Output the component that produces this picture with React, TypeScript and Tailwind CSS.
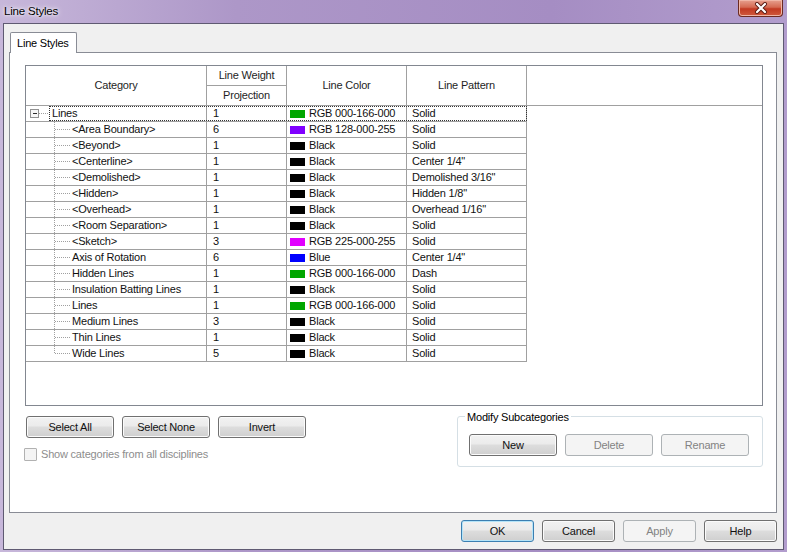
import React from "react";

type Row = {
  name: string;
  weight: string;
  swatch: string;
  color: string;
  pattern: string;
};

const ROWS: Row[] = [
  { name: "Lines", weight: "1", swatch: "#00a600", color: "RGB 000-166-000", pattern: "Solid" },
  { name: "<Area Boundary>", weight: "6", swatch: "#8000ff", color: "RGB 128-000-255", pattern: "Solid" },
  { name: "<Beyond>", weight: "1", swatch: "#000000", color: "Black", pattern: "Solid" },
  { name: "<Centerline>", weight: "1", swatch: "#000000", color: "Black", pattern: "Center 1/4\"" },
  { name: "<Demolished>", weight: "1", swatch: "#000000", color: "Black", pattern: "Demolished 3/16\"" },
  { name: "<Hidden>", weight: "1", swatch: "#000000", color: "Black", pattern: "Hidden 1/8\"" },
  { name: "<Overhead>", weight: "1", swatch: "#000000", color: "Black", pattern: "Overhead 1/16\"" },
  { name: "<Room Separation>", weight: "1", swatch: "#000000", color: "Black", pattern: "Solid" },
  { name: "<Sketch>", weight: "3", swatch: "#e100ff", color: "RGB 225-000-255", pattern: "Solid" },
  { name: "Axis of Rotation", weight: "6", swatch: "#0000ff", color: "Blue", pattern: "Center 1/4\"" },
  { name: "Hidden Lines", weight: "1", swatch: "#00a600", color: "RGB 000-166-000", pattern: "Dash" },
  { name: "Insulation Batting Lines", weight: "1", swatch: "#000000", color: "Black", pattern: "Solid" },
  { name: "Lines", weight: "1", swatch: "#00a600", color: "RGB 000-166-000", pattern: "Solid" },
  { name: "Medium Lines", weight: "3", swatch: "#000000", color: "Black", pattern: "Solid" },
  { name: "Thin Lines", weight: "1", swatch: "#000000", color: "Black", pattern: "Solid" },
  { name: "Wide Lines", weight: "5", swatch: "#000000", color: "Black", pattern: "Solid" },
];

function Button({
  label,
  disabled,
  primary,
  width = "w-[88px]",
}: {
  label: string;
  disabled?: boolean;
  primary?: boolean;
  width?: string;
}) {
  const base = `${width} h-[22px] rounded-[3px] border flex items-center justify-center`;
  if (disabled) {
    return (
      <div className={`${base} border-[#adb2b5] bg-[#f4f4f4] text-[#838383]`}>
        {label}
      </div>
    );
  }
  return (
    <div
      className={`${base} text-[#111] bg-[linear-gradient(#f2f2f2,#ebebeb_45%,#dddddd_50%,#cfcfcf)] ${
        primary
          ? "border-[#3c7fb1] shadow-[inset_0_0_0_1px_#b5e4f8]"
          : "border-[#707070] shadow-[inset_0_0_0_1px_#fbfbfb]"
      }`}
    >
      {label}
    </div>
  );
}

function TreeGlyph({ first, last }: { first: boolean; last: boolean }) {
  if (first) {
    return (
      <svg width="25" height="15" className="shrink-0" shapeRendering="crispEdges">
        <rect x="4.5" y="3.5" width="8" height="8" fill="#f7f7f7" stroke="#919191" />
        <line x1="6.5" y1="7.5" x2="11" y2="7.5" stroke="#2c2c2c" />
        <line x1="13" y1="7.5" x2="23" y2="7.5" stroke="#a0a0a0" strokeDasharray="1 1" />
      </svg>
    );
  }
  return (
    <svg width="46" height="15" className="shrink-0" shapeRendering="crispEdges">
      <line x1="28.5" y1="0" x2="28.5" y2={last ? 8 : 15} stroke="#a0a0a0" strokeDasharray="1 1" />
      <line x1="29" y1="7.5" x2="44" y2="7.5" stroke="#a0a0a0" strokeDasharray="1 1" />
    </svg>
  );
}

function LineTable() {
  return (
    <div className="ml-[15px] mt-[12px] w-[738px] h-[341px] border border-[#828790] bg-white flex flex-col">
      <div className="grid grid-cols-[181px_80px_120px_120px_1fr] grid-rows-[20px_20px] text-[#1e1e1e]">
        <div className="row-span-2 border-r border-b border-[#a0a0a0] flex items-center justify-center">
          Category
        </div>
        <div className="border-r border-b border-[#a0a0a0] flex items-center justify-center">
          Line Weight
        </div>
        <div className="row-span-2 border-r border-b border-[#a0a0a0] flex items-center justify-center">
          Line Color
        </div>
        <div className="row-span-2 border-r border-b border-[#a0a0a0] flex items-center justify-center">
          Line Pattern
        </div>
        <div className="row-span-2 border-b border-[#a0a0a0]" />
        <div className="border-r border-b border-[#a0a0a0] flex items-center justify-center">
          Projection
        </div>
      </div>
      {ROWS.map((r, i) => {
        const first = i === 0;
        const last = i === ROWS.length - 1;
        return (
          <div key={i} className="relative flex h-[16px] w-[501px] text-[#111]">
            <div className="w-[181px] border-r border-b border-[#a0a0a0] flex items-center">
              <TreeGlyph first={first} last={last} />
              <span className={first ? "ml-[1px]" : ""}>{r.name}</span>
            </div>
            <div className="w-[80px] border-r border-b border-[#a0a0a0] flex items-center pl-[6px]">
              {r.weight}
            </div>
            <div className="w-[120px] border-r border-b border-[#a0a0a0] flex items-center pl-[3px]">
              <span className="w-[15px] h-[8px] mr-[4px] shrink-0" style={{ backgroundColor: r.swatch }} />
              {r.color}
            </div>
            <div className="w-[120px] border-r border-b border-[#a0a0a0] flex items-center pl-[5px]">
              {r.pattern}
            </div>
            {first && (
              <div className="absolute left-[23px] top-0 right-0 h-[15px] border border-dotted border-[#333]" />
            )}
          </div>
        );
      })}
    </div>
  );
}

export default function App() {
  return (
    <div className="w-[787px] h-[552px] flex flex-col bg-[linear-gradient(90deg,#c7b7da,#ad97c8_30%,#a58dc3_70%,#b29dcd)] font-['Liberation_Sans',Arial,sans-serif] text-[11px] tracking-[-0.2px] overflow-hidden select-none">
      <div className="h-[23px] flex items-start justify-between shrink-0">
        <div className="pl-[4px] pt-[3px] text-[11.5px] text-black [text-shadow:0_0_6px_#ffffff,0_0_3px_#ffffff]">
          Line Styles
        </div>
        <div className="mr-[4px] w-[45px] h-[17px] rounded-b-[4px] border border-t-0 border-[#6b2b22] bg-[linear-gradient(#e7a08f,#d56a52_45%,#c23a22_55%,#cf5a3e)] shadow-[inset_0_0_0_1px_#f0b6a6] flex items-center justify-center">
          <svg width="14" height="12" viewBox="0 0 14 12">
            <path d="M3 2 L11 10 M11 2 L3 10" stroke="#5a1c14" strokeWidth="4" strokeLinecap="round" />
            <path d="M3 2 L11 10 M11 2 L3 10" stroke="#ffffff" strokeWidth="2.2" strokeLinecap="round" />
          </svg>
        </div>
      </div>

      <div className="flex-1 mx-[3px] mb-[3px] border border-[#5f5a72] bg-[#f0f0f0] flex flex-col">
        <div className="flex-1 flex flex-col pt-[8px] pl-[5px] pr-[6px]">
          <div className="ml-[1px] w-[67px] h-[21px] -mb-px relative z-10 bg-white border border-b-0 border-[#898c95] rounded-t-[2px] flex items-center pl-[6px] text-black">
            Line Styles
          </div>
          <div className="h-[461px] border border-[#898c95] bg-white flex flex-col">
            <LineTable />
            <div className="flex mt-[10px]">
              <div className="ml-[16px] flex flex-col">
                <div className="flex gap-[8px]">
                  <Button label="Select All" />
                  <Button label="Select None" />
                  <Button label="Invert" />
                </div>
                <div className="flex items-center mt-[8px] -ml-[2px]">
                  <span className="w-[13px] h-[13px] border border-[#b1b1b1] bg-[#f4f4f4] rounded-[1px]" />
                  <span className="ml-[4px] text-[#8d8d8d]">Show categories from all disciplines</span>
                </div>
              </div>
              <div className="ml-[151px] relative w-[306px] h-[51px] border border-[#d5dfe5] rounded-[3px] flex items-end pb-[10px] pl-[11px] gap-[8px]">
                <span className="absolute left-[7px] -top-[8px] bg-white px-[2px] text-black">
                  Modify Subcategories
                </span>
                <Button label="New" />
                <Button label="Delete" disabled />
                <Button label="Rename" disabled />
              </div>
            </div>
          </div>
        </div>
        <div className="flex justify-end gap-[8px] pr-[6px] pt-[7px] pb-[7px]">
          <Button label="OK" primary width="w-[73px]" />
          <Button label="Cancel" width="w-[73px]" />
          <Button label="Apply" disabled width="w-[73px]" />
          <Button label="Help" width="w-[73px]" />
        </div>
      </div>
    </div>
  );
}
